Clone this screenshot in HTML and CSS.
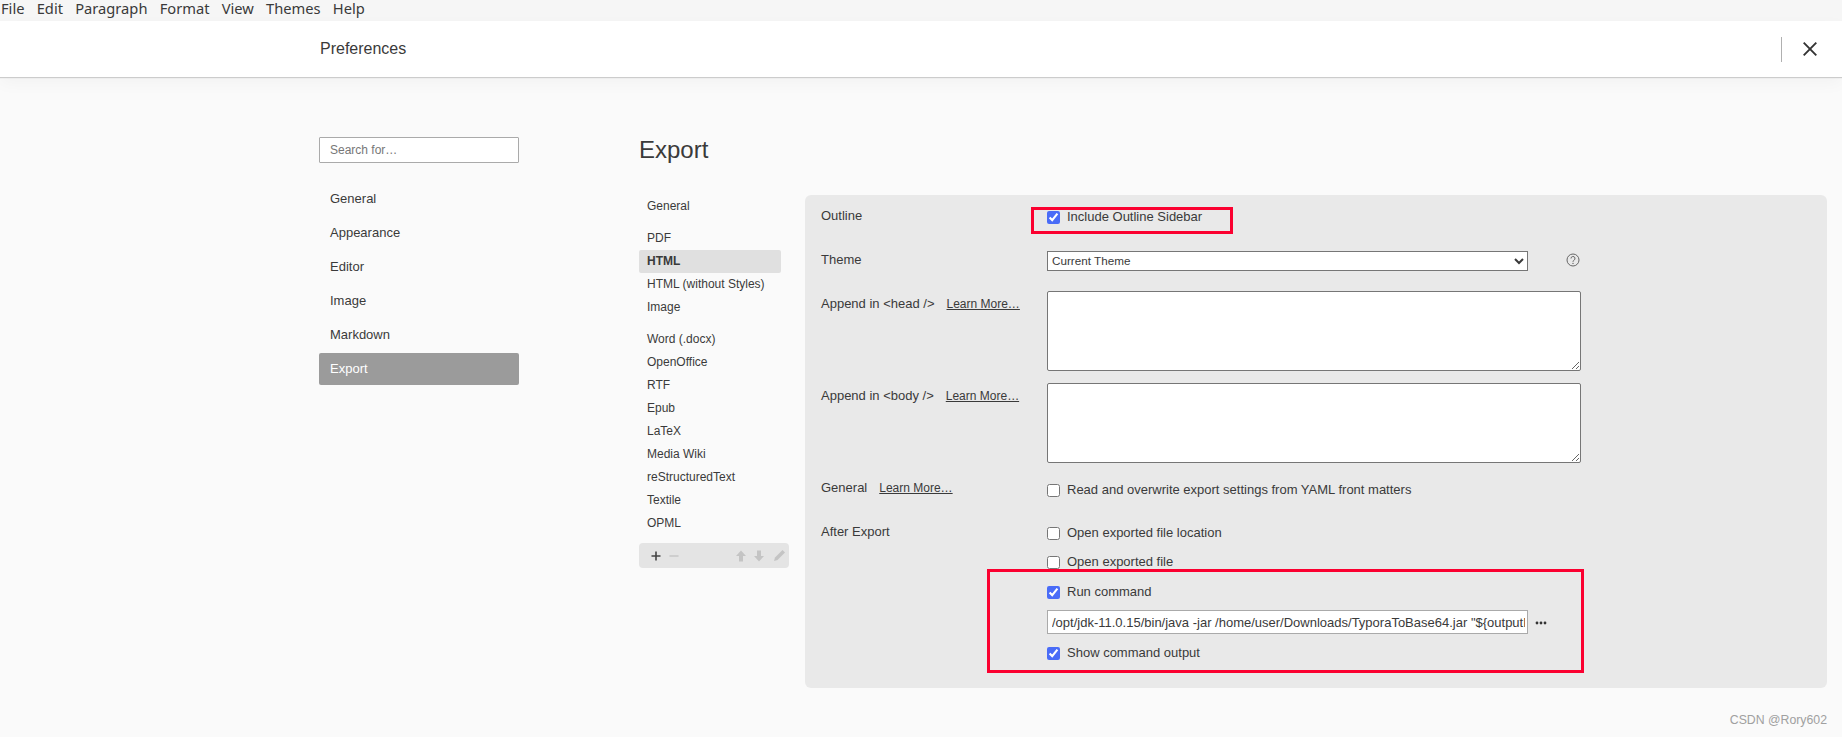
FILE: index.html
```html
<!DOCTYPE html>
<html lang="en">
<head>
<meta charset="utf-8">
<title>Preferences</title>
<link rel="stylesheet" href="styles.css">
</head>
<body>
<div class="menubar">
  <span>File</span><span>Edit</span><span>Paragraph</span><span>Format</span><span>View</span><span>Themes</span><span>Help</span>
</div>
<header class="topbar">
  <div class="topbar-title">Preferences</div>
  <div class="topbar-divider"></div>
  <button class="close-btn" aria-label="Close">
    <svg width="14" height="14" viewBox="0 0 14 14"><path d="M.7 .7L13.300 13.300M13.300 .7L.7 13.300" stroke="#333" stroke-width="1.900" fill="none"/></svg>
  </button>
</header>
<main class="content">
  <aside class="nav">
    <input class="search" type="text" placeholder="Search for…">
    <ul class="nav-list">
      <li>General</li>
      <li>Appearance</li>
      <li>Editor</li>
      <li>Image</li>
      <li>Markdown</li>
      <li class="active">Export</li>
    </ul>
  </aside>
  <section class="main">
    <h1 class="heading">Export</h1>
    <div class="columns">
      <div class="sub">
        <ul class="sub-list first">
          <li>General</li>
        </ul>
        <ul class="sub-list">
          <li>PDF</li>
          <li class="active">HTML</li>
          <li>HTML (without Styles)</li>
          <li>Image</li>
        </ul>
        <ul class="sub-list">
          <li>Word (.docx)</li>
          <li>OpenOffice</li>
          <li>RTF</li>
          <li>Epub</li>
          <li>LaTeX</li>
          <li>Media Wiki</li>
          <li>reStructuredText</li>
          <li>Textile</li>
          <li>OPML</li>
        </ul>
        <div class="toolbar">
          <svg class="tool" width="12" height="12" viewBox="0 0 12 12"><path d="M6 1.5V10.5M1.5 6H10.5" stroke="#444" stroke-width="1.6"/></svg>
          <svg class="tool" width="12" height="12" viewBox="0 0 12 12"><path d="M1.5 6H10.5" stroke="#c4c4c4" stroke-width="1.4"/></svg>
          <span class="tool-spacer"></span>
          <svg class="tool" width="12" height="12" viewBox="0 0 12 12"><path d="M6 .5L11 6H8V11.5H4V6H1Z" fill="#c4c4c4"/></svg>
          <svg class="tool" width="12" height="12" viewBox="0 0 12 12"><path d="M6 11.500L11 6H8V.5H4V6H1Z" fill="#c4c4c4"/></svg>
          <svg class="tool tool-pencil" width="13" height="13" viewBox="0 0 13 13"><path d="M9.500 1L12 3.500L4.500 11L1 12L2 8.500Z" fill="#c4c4c4"/></svg>
        </div>
      </div>
      <div class="panel">
        <div class="row row-outline">
          <div class="label">Outline</div>
          <label class="check"><input type="checkbox" checked>Include Outline Sidebar</label>
        </div>
        <div class="row row-theme">
          <div class="label">Theme</div>
          <div class="theme-control">
            <select class="select"><option>Current Theme</option></select>
            <svg class="help" width="14" height="14" viewBox="0 0 14 14"><circle cx="7" cy="7" r="6" stroke="#666" stroke-width="1" fill="none"/><path d="M5 5.500A2 2 0 1 1 7.800 7.300C7.200 7.700 7 8 7 8.800" stroke="#666" stroke-width="1" fill="none"/><circle cx="7" cy="10.400" r=".7" fill="#666"/></svg>
          </div>
        </div>
        <div class="row row-area">
          <div class="label">Append in &lt;head /&gt;<a class="more">Learn More…</a></div>
          <textarea class="area"></textarea>
        </div>
        <div class="row row-area-2">
          <div class="label">Append in &lt;body /&gt;<a class="more">Learn More…</a></div>
          <textarea class="area"></textarea>
        </div>
        <div class="row row-general">
          <div class="label">General<a class="more">Learn More…</a></div>
          <label class="check"><input type="checkbox">Read and overwrite export settings from YAML front matters</label>
        </div>
        <div class="row row-after">
          <div class="label">After Export</div>
          <div class="after-stack">
            <label class="check"><input type="checkbox">Open exported file location</label>
            <label class="check"><input type="checkbox">Open exported file</label>
            <label class="check"><input type="checkbox" checked>Run command</label>
            <div class="cmd">
              <input class="cmd-input" type="text" value="/opt/jdk-11.0.15/bin/java -jar /home/user/Downloads/TyporaToBase64.jar &quot;${outputPath}&quot;">
              <svg class="dots" width="12" height="4" viewBox="0 0 12 4"><circle cx="2" cy="2" r="1.400" fill="#333"/><circle cx="6" cy="2" r="1.400" fill="#333"/><circle cx="10" cy="2" r="1.400" fill="#333"/></svg>
            </div>
            <label class="check"><input type="checkbox" checked>Show command output</label>
          </div>
        </div>
      </div>
    </div>
  </section>
</main>
<div class="mark mark-outline"></div>
<div class="mark mark-run"></div>
<div class="watermark">CSDN @Rory602</div>
</body>
</html>
```
FILE: styles.css
```css
* { box-sizing: border-box; }
html, body { margin: 0; height: 100%; }
body {
  position: relative;
  height: 737px;
  overflow: hidden;
  background: #fafafa;
  color: #3a3a3a;
  font-family: "Liberation Sans", Arial, sans-serif;
  font-size: 13px;
}
ul { list-style: none; margin: 0; padding: 0; }

.menubar {
  display: flex;
  height: 21px;
  background: #f6f6f6;
  padding-left: 1px;
  gap: 12.200px;
  font-family: "Noto Sans", sans-serif;
  font-size: 14.700px;
  line-height: 16px;
  color: #3a3a3a;
}

.topbar {
  position: relative;
  display: flex;
  align-items: center;
  height: 56px;
  background: #fff;
  padding-left: 320px;
  box-shadow: 0 1px 1px #cccccc, 0 6px 16px rgba(0,0,0,.035);
}
.topbar-title { flex: 1; font-size: 16px; color: #3a3a3a; }
.topbar-divider { width: 1px; height: 25px; background: #b0b0b0; }
.close-btn {
  display: flex;
  border: 0;
  background: none;
  padding: 0;
  margin: 0 25px 0 21px;
}

.content { display: flex; padding-left: 319px; }

.nav { width: 200px; padding-top: 60px; }
.search {
  display: block;
  width: 100%;
  height: 26px;
  border: 1px solid #aaa;
  border-radius: 1px;
  background: #fff;
  padding: 0 10px;
  font: 12px "Liberation Sans", Arial, sans-serif;
}
.search::placeholder { color: #777; }
.nav-list { margin-top: 20px; }
.nav-list li {
  height: 32px;
  margin-bottom: 2px;
  padding-left: 11px;
  line-height: 32px;
  border-radius: 2px;
}
.nav-list li.active { background: #9b9b9b; color: #fff; }

.main { margin-left: 120px; }
.heading {
  margin: 59px 0 0;
  font-size: 24px;
  font-weight: 400;
  line-height: 28px;
  color: #3a3a3a;
}

.columns { display: flex; margin-top: 31px; gap: 16px; align-items: flex-start; }

.sub { width: 150px; font-size: 12px; }
.sub-list { width: 142px; margin-bottom: 9px; }
.sub-list li {
  height: 23px;
  line-height: 23px;
  padding-left: 8px;
  border-radius: 2px;
}
.sub-list li.active { background: #e0e0e0; font-weight: 700; }
.toolbar {
  display: flex;
  align-items: center;
  height: 25px;
  margin-top: -1px;
  padding: 0 3px 0 11px;
  gap: 6px;
  background: #e4e4e4;
  border-radius: 4px;
}
.tool-spacer { flex: 1; }
.tool-pencil { margin-left: 2px; }

.panel {
  width: 1022px;
  height: 493px;
  background: #e9e9e9;
  border-radius: 6px;
  padding: 13px 16px 12px;
}
.row { display: grid; grid-template-columns: 226px 1fr; align-items: start; }
.label { line-height: 16px; white-space: nowrap; }
.more { margin-left: 12px; font-size: 12px; text-decoration: underline; }
.check {
  display: flex;
  align-items: center;
  height: 20px;
  line-height: 20px;
}
.check input {
  width: 13px;
  height: 13px;
  margin: 0 7px 0 0;
  accent-color: #4a6cf7;
}
.row-outline { height: 43px; }
.row-outline .check { margin-top: -1px; }
.row-theme { height: 40px; }
.row-theme .label { margin-top: 1px; }
.theme-control { display: flex; align-items: center; gap: 38px; }
.select {
  width: 481px;
  height: 20px;
  padding-bottom: 2px;
  font: 11.700px "Liberation Sans", Arial, sans-serif;
  background: #fff;
  color: #3a3a3a;
  border: 1px solid #767676;
}
.help { margin-top: -2px; }
.row-area { height: 92px; }
.row-area-2 { height: 96px; }
.row-area .label, .row-area-2 .label { margin-top: 5px; }
.area {
  display: block;
  width: 534px;
  height: 80px;
  background: #fff;
  border: 1px solid #767676;
  border-radius: 2px;
}
.row-general { height: 44px; }
.row-general .label { margin-top: 1px; }
.row-general .check { margin-top: 1px; }
.row-after .label { margin-top: 1px; }
.after-stack { display: flex; flex-direction: column; gap: 9px; }
.after-stack .check { height: 20px; }
.after-stack .check:nth-child(3) { margin-top: 1px; }
.cmd { display: flex; align-items: center; gap: 7px; margin-top: -1px; }
.cmd-input {
  width: 481px;
  height: 24px;
  background: #fff;
  border: 1px solid #aaa;
  padding: 0 2px 0 4px;
  color: #3a3a3a;
  font: 13px "Liberation Sans", Arial, sans-serif;
}
.dots { margin-top: 1px; }

.mark { position: absolute; border: 3px solid #fb0030; }
.mark-outline { left: 1031px; top: 207px; width: 202px; height: 27px; }
.mark-run { left: 987px; top: 569px; width: 597px; height: 104px; }
.watermark {
  position: absolute;
  right: 15px;
  top: 712px;
  font-size: 12.300px;
  line-height: 16px;
  color: #a0a0a0;
}
```
